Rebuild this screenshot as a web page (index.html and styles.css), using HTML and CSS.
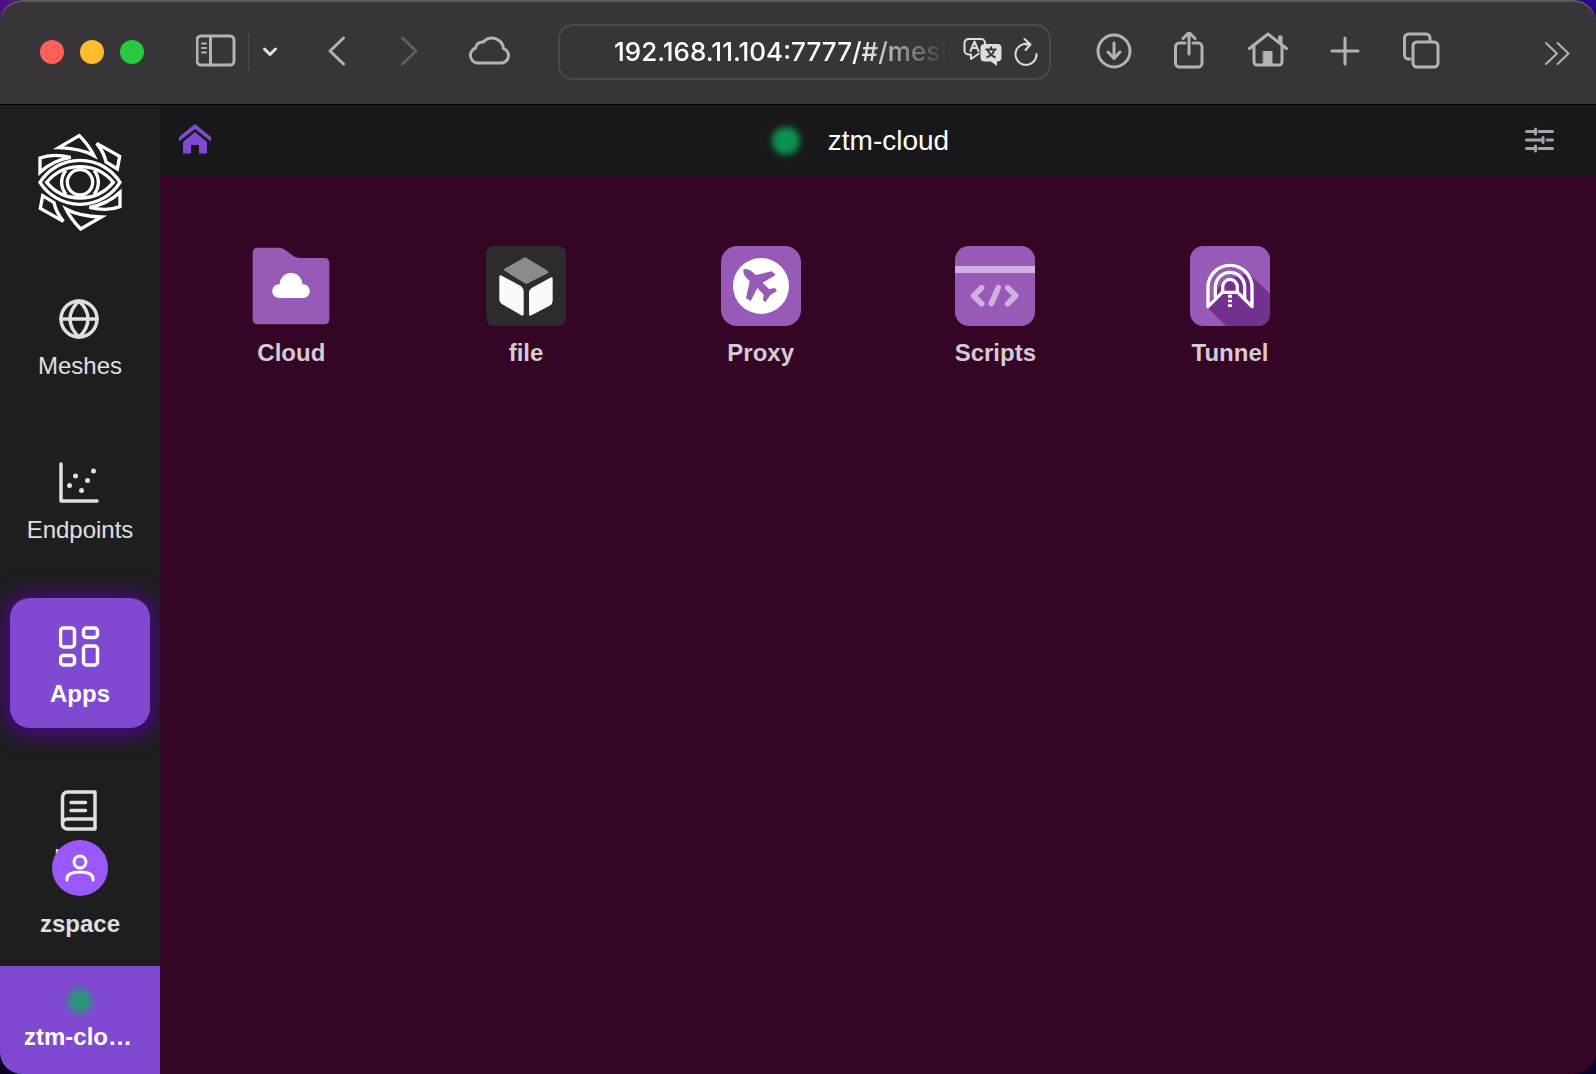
FILE: index.html
```html
<!DOCTYPE html>
<html lang="en">
<head>
<meta charset="utf-8">
<meta name="viewport" content="width=device-width, initial-scale=1">
<title>ztm-cloud</title>
<link rel="stylesheet" href="styles.css">
</head>
<body>
<div class="window">
  <header class="toolbar">
    <div class="lights">
      <button class="light light-close" aria-label="Close"></button>
      <button class="light light-min" aria-label="Minimize"></button>
      <button class="light light-max" aria-label="Zoom"></button>
    </div>
    <div class="sidebar-tools">
      <button class="tool" aria-label="Toggle sidebar">
        <svg width="40" height="40" viewBox="0 2 40 40"><rect x="1" y="6" width="37" height="29" rx="4"/><path d="M14.500 6V35"/><path class="thin" d="M6 13.500H10M6 18H10M6 22.500H10"/></svg>
      </button>
      <span class="divider"></span>
      <button class="tool tool-small" aria-label="Tab groups">
        <svg width="28" height="40" viewBox="0 1 28 40"><path class="bright" d="M8.500 18L14 23.500L19.500 18"/></svg>
      </button>
    </div>
    <div class="history">
      <button class="tool" aria-label="Back"><svg width="40" height="40" viewBox="0 1 40 40"><path d="M26.500 7L13 20L26.500 33"/></svg></button>
      <button class="tool tool-off" aria-label="Forward"><svg width="40" height="40" viewBox="0 1 40 40"><path d="M13.500 7L27 20L13.500 33"/></svg></button>
    </div>
    <button class="tool" aria-label="iCloud">
      <svg width="42" height="40" viewBox="0 2 42 40"><path d="M9 33H32A7.500 7.500 0 0 0 35.500 18.500A11.500 11.500 0 0 0 15.500 12A7 7 0 0 0 7.500 18A7.800 7.800 0 0 0 9 33Z"/></svg>
    </button>
    <form class="address">
      <input class="address-input" type="text" aria-label="Address" value="192.168.11.104:7777/#/mesh">
      <button class="address-button" type="button" aria-label="Translate">
        <svg width="40" height="30" viewBox="0 0 40 30"><path class="line" d="M16 16.500L8 22V17.500H5.500A4 4 0 0 1 1.500 13.500V6A4 4 0 0 1 5.500 2H18A4 4 0 0 1 22 6V7"/><path class="line" d="M7.500 14L11.500 4.500L15.500 14M9 11H14"/><path class="solid" d="M21.500 7H34.500A4 4 0 0 1 38.500 11V20.500A4 4 0 0 1 34.500 24.500H34V29L28 24.500H21.500A4 4 0 0 1 17.500 20.500V11A4 4 0 0 1 21.500 7Z"/><path class="dark" d="M22.500 12.500H33.500M28 9.500V12.500M31.500 12.500Q30 18 23.500 20.500M24.500 12.500Q26.500 18 32.500 20.500"/></svg>
      </button>
      <button class="address-button" type="button" aria-label="Reload">
        <svg width="26" height="30" viewBox="0 0 26 30"><path class="line" d="M16.500 7.500A10.500 10.500 0 1 0 23.500 17M11.500 2L17.500 7.500L12.500 13M17 7.500H13"/></svg>
      </button>
    </form>
    <div class="actions">
      <button class="tool" aria-label="Downloads"><svg width="40" height="40" viewBox="0 1 40 40"><circle cx="20" cy="20" r="16"/><path d="M20 12V27M14 21L20 27.500L26 21"/></svg></button>
      <button class="tool" aria-label="Share"><svg width="40" height="40" viewBox="1 1 40 40"><path d="M15 12H9.500A4 4 0 0 0 5.500 16V32A4 4 0 0 0 9.500 36H28A4 4 0 0 0 32 32V16A4 4 0 0 0 28 12H23M19 23V2M13 7.500L19 1.500L25 7.500"/></svg></button>
      <button class="tool" aria-label="Home page"><svg width="40" height="40" viewBox="0 1 40 40"><path d="M1.500 17.500L20 3L38.500 17.500M6 15V31A3 3 0 0 0 9 34H31A3 3 0 0 0 34 31V15"/><path class="fill" d="M15.500 20.500H24V34H15.500ZM31 5H34V14L31 11Z"/></svg></button>
      <button class="tool" aria-label="New tab"><svg width="40" height="40" viewBox="0 0 40 40"><path d="M20 6V32M7 19H33"/></svg></button>
      <button class="tool" aria-label="Show tabs"><svg width="40" height="40" viewBox="1 1 40 40"><path d="M9 28H7.500A4 4 0 0 1 3.500 24V7A4 4 0 0 1 7.500 3H25A4 4 0 0 1 29 7V9"/><rect x="12" y="11" width="25" height="25" rx="4"/></svg></button>
    </div>
    <button class="tool tool-more" aria-label="More"><svg width="40" height="40" viewBox="0 0 40 40"><path class="mid" d="M9 11L20 21.500L9 32M20.500 11L31.500 21.500L20.500 32"/></svg></button>
  </header>

  <div class="body">
    <aside class="sidebar">
      <svg class="logo" width="84" height="98" viewBox="54 38 252 294" aria-hidden="true">
        <defs>
          <g id="shards">
            <path d="M178 46Q206 74 222 106Q182 84 116 82Z"/>
            <path d="M230 69L299 108L292 146L258 125Q252 96 230 69Z"/>
            <path d="M60 156V113Q98 98 152 111Q98 120 60 156Z"/>
          </g>
        </defs>
        <use href="#shards"/>
        <use href="#shards" transform="rotate(180 180 186)"/>
        <path d="M60 186A142 142 0 0 1 300 186A142 142 0 0 1 60 186Z"/>
        <path d="M80 186A130 130 0 0 1 280 186A130 130 0 0 1 80 186Z"/>
        <circle cx="180" cy="186" r="38"/>
        <path d="M138 150A56 56 0 0 0 138 222M222 150A56 56 0 0 1 222 222"/>
      </svg>
      <nav class="nav">
        <a class="nav-item" href="#meshes">
          <svg width="42" height="42" viewBox="0 0 42 42"><circle cx="20" cy="21" r="18"/><path d="M20 3C8 14 8 28 20 39M20 3C32 14 32 28 20 39M2 21H38"/></svg>
          <span>Meshes</span>
        </a>
        <a class="nav-item" href="#endpoints">
          <svg width="42" height="42" viewBox="0 0 42 42"><path d="M2 2V39H38"/><g class="dots"><circle cx="10.500" cy="23.500" r="2.500"/><circle cx="16.500" cy="14" r="2.500"/><circle cx="22.500" cy="28.500" r="2.500"/><circle cx="28.500" cy="18.500" r="2.500"/><circle cx="34.500" cy="9" r="2.500"/></g></svg>
          <span>Endpoints</span>
        </a>
        <a class="nav-item nav-active" href="#apps">
          <svg width="42" height="42" viewBox="0 0 42 42"><rect x="1.500" y="2" width="14" height="19" rx="3"/><rect x="24.500" y="2" width="14" height="9.500" rx="3"/><rect x="1.500" y="29.500" width="14" height="9.500" rx="3"/><rect x="24.500" y="20" width="14" height="19" rx="3"/></svg>
          <span>Apps</span>
        </a>
        <a class="nav-item" href="#logs">
          <svg width="42" height="42" viewBox="0 0 42 42"><path d="M36 2V39H8.500A5 5 0 0 1 3.500 34V7A5 5 0 0 1 8.500 2ZM36 29H8.500A5 5 0 0 0 3.500 34M12 12.500H26.500M12 20.500H26.500"/></svg>
          <span>Logs</span>
        </a>
      </nav>
      <div class="account">
        <button class="avatar" aria-label="Account">
          <svg width="30" height="28" viewBox="0 0 30 28"><circle cx="15" cy="8" r="6"/><path d="M2 26V25C2 20 8 18 15 18S28 20 28 25V26"/></svg>
        </button>
        <span class="user">zspace</span>
        <button class="mesh">
          <span class="status status-small"></span>
          <span class="mesh-name">ztm-cloud</span>
        </button>
      </div>
    </aside>

    <main class="main">
      <div class="appbar">
        <button class="home" aria-label="Home"><svg width="32" height="30" viewBox="0 0 32 30"><path d="M16 0L32 13V17.500L16 5L0 17.500V13ZM16 8L28 18V29.500H20V21H12V29.500H4V18Z"/></svg></button>
        <h1 class="title"><span class="status"></span>ztm-cloud</h1>
        <button class="settings" aria-label="Settings"><svg width="30" height="26" viewBox="0 0 30 26"><path d="M1.500 4.500H10.500M14 4.500H27.500M10.500 2V7M1.500 13H18M22 13H27.500M18 10.500V15.500M1.500 21.500H10.500M14 21.500H27.500M10.500 19V24"/></svg></button>
      </div>
      <div class="apps">
        <a class="app" href="#cloud">
          <svg width="80" height="80" viewBox="63 48 240 240"><path fill="#975ab7" d="M86 53H146Q156 53 166 60L190 78Q199 84 212 84H282Q298 84 298 100V267Q298 283 282 283H84Q68 283 68 267V69Q68 53 84 53Z"/><path fill="#fff" d="M147 204A20.500 20.500 0 0 1 147 163H149A34 34 0 0 1 217 163H219A20.500 20.500 0 0 1 219 204Z"/></svg>
          <span>Cloud</span>
        </a>
        <a class="app" href="#file">
          <svg width="80" height="80" viewBox="768 48 240 240"><rect x="768" y="48" width="240" height="240" rx="24" fill="#2c2c2c"/><g stroke-width="8" stroke-linejoin="round"><path fill="#8b8b8b" stroke="#8b8b8b" d="M885 86L951 126L889 158L826 119Z"/><path fill="#f8fcfd" stroke="#f8fcfd" d="M812 140L868 170Q877 176 877 184V253L819 219Q812 215 812 207ZM964 146V213Q964 220 957 224L901 253V188Q901 181 908 177Z"/></g></svg>
          <span>file</span>
        </a>
        <a class="app" href="#proxy">
          <svg width="80" height="80" viewBox="63 48 240 240"><rect x="63" y="48" width="240" height="240" rx="48" fill="#975ab7"/><circle cx="183" cy="168" r="84" fill="#fff"/><path fill="#975ab7" d="M131 118Q146 112 167 135L216 124L227 135L188 158L207 177L225 174L231 183L211 195L196 217L189 210L191 194L172 174L152 213L138 205L149 153Q126 134 131 118Z"/></svg>
          <span>Proxy</span>
        </a>
        <a class="app" href="#scripts">
          <svg width="80" height="80" viewBox="765 48 240 240"><rect x="765" y="48" width="240" height="240" rx="42" fill="#975ab7"/><path fill="#d0b0df" d="M765 108H1005V129H765Z"/><path fill="none" stroke="#d0b0df" stroke-width="17" stroke-linecap="round" stroke-linejoin="round" d="M845 173L821 197L845 221M895 173L874 221M923 173L947 197L923 221"/></svg>
          <span>Scripts</span>
        </a>
        <a class="app" href="#tunnel">
          <svg width="80" height="80" viewBox="60 48 240 240"><rect x="60" y="48" width="240" height="240" rx="40" fill="#975ab7"/><path fill="#73308f" d="M236 130L300 192V248Q300 288 260 288H168L111 232L160 150Z"/><path fill="none" stroke="#fff" stroke-width="10" stroke-linejoin="round" d="M114 230V172A66 66 0 0 1 246 172V230L203 187H157ZM136 208V172A44 45 0 0 1 224 172V208M158 187V172A22 24 0 0 1 202 172V187"/><path fill="#fff" d="M174 194H186V203H174ZM174 209H186V217H174ZM174 223H186V231H174Z"/></svg>
          <span>Tunnel</span>
        </a>
      </div>
    </main>
  </div>
</div>
</body>
</html>
```

FILE: styles.css
```css
* { box-sizing: border-box; }

body {
  margin: 0;
  background: linear-gradient(to bottom, transparent 40%, #0b0226 80%), linear-gradient(to right, #51117f, #2c078a);
  font-family: "Liberation Sans", Arial, Helvetica, sans-serif;
}

button {
  margin: 0;
  padding: 0;
  border: 0;
  background: none;
  color: inherit;
  font: inherit;
  cursor: pointer;
}

a { color: inherit; text-decoration: none; }

svg { display: block; flex: none; }

.window {
  display: flex;
  flex-direction: column;
  min-height: 100vh;
  border-radius: 22px;
  overflow: hidden;
}

/* Browser toolbar */
.toolbar {
  display: flex;
  align-items: center;
  height: 105px;
  padding: 0 19px 0 40px;
  background: #38353a;
  border-bottom: 1px solid #000;
  border-radius: 22px 22px 0 0;
  box-shadow: inset 0 2px 0 #5b595e;
}

.lights { display: flex; gap: 16px; }
.light { width: 24px; height: 24px; border-radius: 50%; }
.light-close { background: #ff5f57; }
.light-min { background: #febc2e; }
.light-max { background: #28c840; }

.sidebar-tools { display: flex; align-items: center; margin-left: 52px; }
.divider { width: 1px; height: 36px; margin: 0 7px 0 12px; background: #4d4b50; }
.history { display: flex; gap: 32px; margin: 0 39px 0 33px; }

.tool svg {
  fill: none;
  stroke: #b4b2b7;
  stroke-width: 3;
  stroke-linecap: round;
  stroke-linejoin: round;
}
.tool .thin { stroke-width: 2; }
.tool .mid { stroke-width: 2; }
.tool .bright { stroke: #e4e3e5; stroke-width: 3; }
.tool .fill { fill: #b4b2b7; stroke-width: 1; }
.tool-off svg { stroke: #5f5d62; }

.address {
  display: flex;
  flex: 1;
  align-items: center;
  min-width: 0;
  height: 56px;
  margin: 0 43px 0 48px;
  padding: 0 10px 0 54px;
  border: 2px solid #4c4a4f;
  border-radius: 15px;
}
.address-input {
  flex: 1;
  min-width: 0;
  height: 40px;
  margin-right: 16px;
  padding: 0;
  border: 0;
  outline: 0;
  background: none;
  color: #fff;
  font: 500 26px/40px Inter, sans-serif;
  -webkit-mask-image: linear-gradient(to left, transparent, #000 92px);
  mask-image: linear-gradient(to left, transparent, #000 92px);
}
.address-button + .address-button { margin-left: 10px; }
.address-button .line {
  fill: none;
  stroke: #dddcde;
  stroke-width: 2;
  stroke-linecap: round;
  stroke-linejoin: round;
}
.address-button .solid { fill: #dddcde; }
.address-button .dark { fill: none; stroke: #38353a; stroke-width: 2; }

.actions { display: flex; gap: 37px; }
.tool-more { margin-left: 95px; }

/* Page */
.body { display: flex; flex: 1; }

.sidebar {
  position: relative;
  flex: none;
  width: 160px;
  padding: 28px 10px 0;
  background: #1e1e1e;
  color: #e0e0e0;
  font-size: 24px;
  line-height: 28px;
  overflow: hidden;
}
.logo {
  margin: 0 auto 39px 28px;
  fill: none;
  stroke: #fff;
  stroke-width: 10;
}

.nav { display: flex; flex-direction: column; gap: 34px; }
.nav-item {
  display: flex;
  flex-direction: column;
  align-items: center;
  gap: 12px;
  height: 130px;
  padding-top: 28px;
  border-radius: 20px;
}
.nav-item svg {
  fill: none;
  stroke: currentColor;
  stroke-width: 3.500;
  stroke-linecap: round;
  stroke-linejoin: round;
}
.nav-item .dots { fill: currentColor; stroke: none; }
.nav-active {
  background: #7f49d1;
  box-shadow: 0 2px 20px 7px #480a7c;
  color: #fff;
  font-weight: 700;
}

.account {
  position: absolute;
  left: 0;
  right: 0;
  bottom: 0;
  display: flex;
  flex-direction: column;
  align-items: center;
  font-weight: 700;
}
.avatar {
  display: flex;
  align-items: center;
  justify-content: center;
  width: 56px;
  height: 56px;
  border-radius: 50%;
  background: #9a58fa;
}
.avatar svg { fill: none; stroke: #fff; stroke-width: 3; stroke-linecap: round; }
.user { margin: 14px 0 28px; }
.mesh {
  display: flex;
  flex-direction: column;
  align-items: center;
  gap: 10px;
  width: 100%;
  height: 108px;
  padding: 23px 24px 0;
  background: #7f49d1;
  color: #fff;
}
.mesh-name {
  width: 100%;
  overflow: hidden;
  text-overflow: ellipsis;
  white-space: nowrap;
}

.status {
  width: 28px;
  height: 28px;
  border-radius: 50%;
  background: #0b9150;
  filter: blur(3px);
}
.status-small { width: 24px; height: 24px; background: #24997a; }

.main {
  position: relative;
  flex: 1;
  min-width: 0;
  background: #340525;
}
.appbar {
  display: grid;
  grid-template-columns: 1fr auto 1fr;
  align-items: center;
  height: 71px;
  padding: 0 41px 0 6px;
  background: #18181a;
}
.home { justify-self: start; padding: 0 13px 3px; }
.home svg { fill: #7f49d1; }
.title {
  display: flex;
  align-items: center;
  gap: 28px;
  margin: 0;
  color: #fff;
  font-size: 28px;
  font-weight: 400;
  line-height: 32px;
}
.settings { justify-self: end; padding-bottom: 2px; }
.settings svg { fill: none; stroke: #a3a3ab; stroke-width: 3; stroke-linecap: round; }

.apps {
  display: grid;
  grid-template-columns: repeat(6, 1fr);
  padding: 70px 14px;
}
.app {
  display: flex;
  flex-direction: column;
  align-items: center;
  gap: 13px;
  color: #d6cbd3;
  font-size: 24px;
  font-weight: 700;
  line-height: 28px;
}
```
